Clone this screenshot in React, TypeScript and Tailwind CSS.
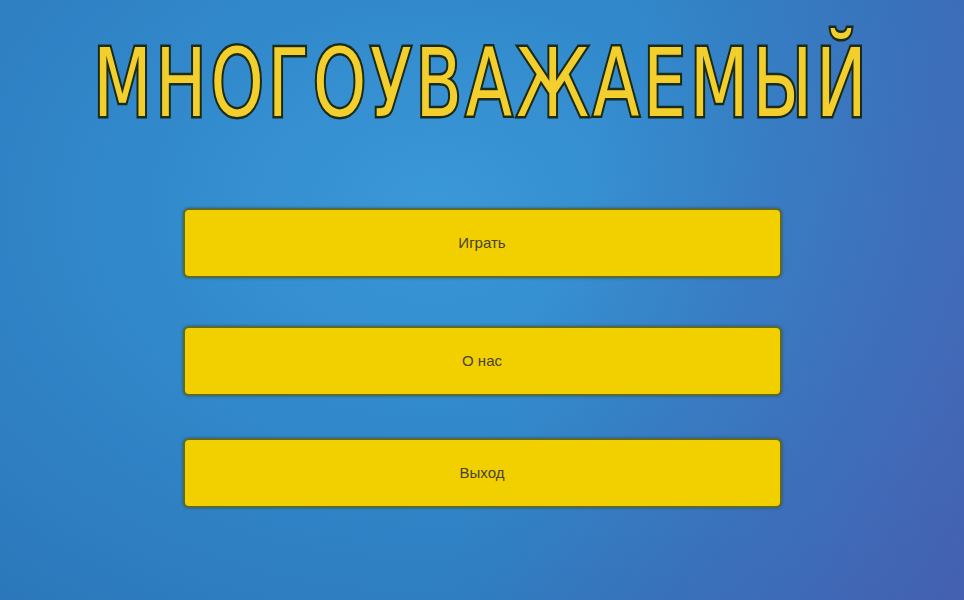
export default function App() {
  const items = ["Играть", "О нас", "Выход"];

  return (
    <div className="relative w-[964px] h-[600px] overflow-hidden bg-[#2f86c8]">
      <div className="absolute inset-0 bg-[radial-gradient(ellipse_at_45%_35%,#3b98d8_0%,#3189cb_40%,#2b74b8_100%)]" />
      <div className="absolute inset-0 bg-[linear-gradient(110deg,rgba(0,0,0,0)_55%,rgba(90,80,170,0.55)_100%)]" />
      <div className="relative flex flex-col items-center">
        <h1 className="mt-[37px] h-[94px] text-[94px] leading-[94px] tracking-[5px] text-[#f2cf2c] font-['DejaVu_Sans_Condensed','DejaVu_Sans',sans-serif] font-normal [-webkit-text-stroke:5px_#1c2a18] [paint-order:stroke_fill] scale-x-[0.8] whitespace-nowrap">
          МНОГОУВАЖАЕМЫЙ
        </h1>
        <div className="mt-[77px] flex flex-col w-[599px]">
          {items.map((label, i) => (
            <button
              key={label}
              className={
                "h-[70px] w-full rounded-[6px] border-2 border-[#5b6a2e] bg-[#f2d000] text-[15px] text-[#45432c] font-['Liberation_Sans',Arial,sans-serif] shadow-[0_0_3px_rgba(40,60,30,0.6)] " +
                (i === 0 ? "" : i === 1 ? "mt-[48px]" : "mt-[42px]")
              }
            >
              {label}
            </button>
          ))}
        </div>
      </div>
    </div>
  );
}
